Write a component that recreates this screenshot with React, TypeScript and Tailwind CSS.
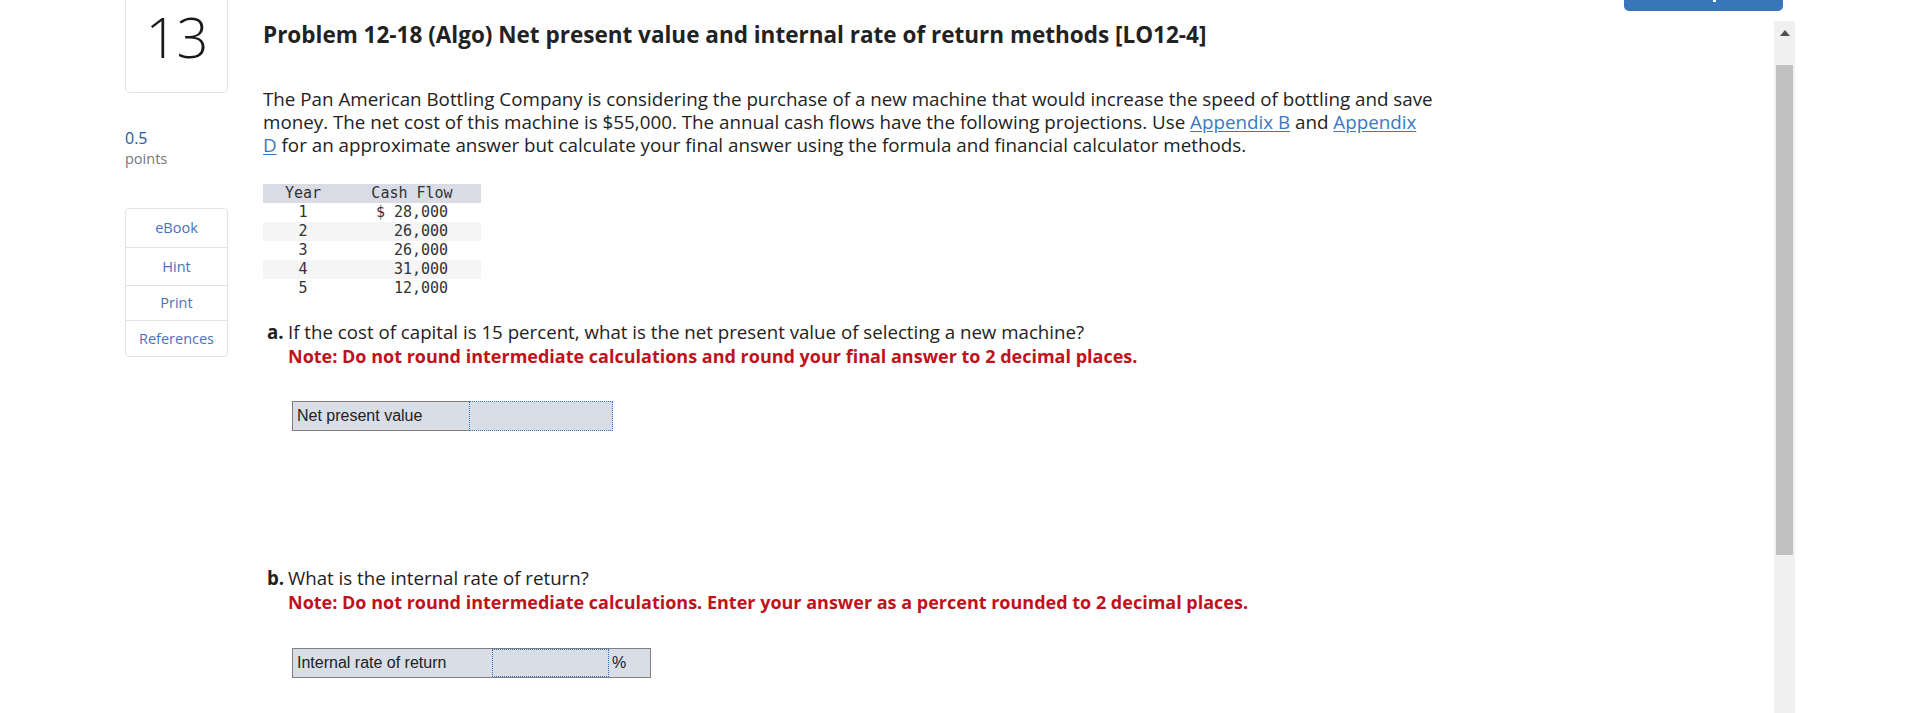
import React from 'react';

const rows = [
  { year: '1', cash: '$ 28,000' },
  { year: '2', cash: '  26,000' },
  { year: '3', cash: '  26,000' },
  { year: '4', cash: '  31,000' },
  { year: '5', cash: '  12,000' },
];

const tools = [
  { label: 'eBook', h: 'h-[38px]' },
  { label: 'Hint', h: 'h-[38px]' },
  { label: 'Print', h: 'h-[35px]' },
  { label: 'References', h: 'h-[36px]' },
];

function DottedInput({ w }: { w: string }) {
  return <div className={`${w} h-full border border-dotted border-[#2f6fc0] bg-[#d9dde6]`} />;
}

export default function App() {
  return (
    <div className="relative min-h-[713px] bg-white font-['Open_Sans',sans-serif] text-[#222]">
      {/* top action button, clipped by the viewport */}
      <div className="absolute left-[1624px] top-0 h-[11px] w-[159px] rounded-b-[5px] bg-[#3876b9]">
        <span className="absolute left-[89px] top-0 h-[2px] w-[3px] bg-white" />
      </div>

      <div className="flex">
        {/* Left rail */}
        <aside className="ml-[125px] w-[103px] shrink-0">
          <div className="flex h-[93px] items-start justify-center rounded-b-[5px] border border-t-0 border-[#e3e3e3]">
            <span className="text-[56px] font-light leading-[72px] tracking-[-1px] text-[#1a1a1a]">13</span>
          </div>
          <div className="mt-[35px] text-[16px] leading-[20px] text-[#2a5897]">0.5</div>
          <div className="mt-[1px] text-[14.5px] leading-[20px] text-[#777]">points</div>
          <div className="mt-[39px] overflow-hidden rounded-[4px] border border-[#e3e3e3]">
            {tools.map((t, i) => (
              <div
                key={t.label}
                className={`${t.h} flex items-center justify-center text-[14.5px] text-[#4a72b6] ${i > 0 ? 'border-t border-[#e3e3e3]' : ''}`}
              >
                {t.label}
              </div>
            ))}
          </div>
        </aside>

        {/* Question body */}
        <main className="ml-[35px] min-w-0 flex-1 pt-[20px]">
          <h1 className="text-[22.5px] font-bold leading-[30px] text-[#222]">
            Problem 12-18 (Algo) Net present value and internal rate of return methods [LO12-4]
          </h1>

          <p className="mt-[38px] w-[1300px] text-[18.8px] leading-[23px] text-[#222]">
            The Pan American Bottling Company is considering the purchase of a new machine that would increase the speed of bottling and save
            <br />
            money. The net cost of this machine is $55,000. The annual cash flows have the following projections. Use{' '}
            <a className="text-[#3b78c3] underline underline-offset-2">Appendix B</a> and{' '}
            <a className="text-[#3b78c3] underline underline-offset-2">Appendix</a>
            <br />
            <a className="text-[#3b78c3] underline underline-offset-2">D</a> for an approximate answer but calculate your final answer using the formula and financial calculator methods.
          </p>

          <table className="mt-[27px] w-[218px] border-collapse font-['DejaVu_Sans_Mono',monospace] text-[15px] text-[#333]">
            <thead>
              <tr className="h-[19px] bg-[#d9dce5]">
                <th className="w-[80px] p-0 text-center font-normal leading-[19px]">Year</th>
                <th className="p-0 text-center font-normal leading-[19px]">Cash Flow</th>
              </tr>
            </thead>
            <tbody>
              {rows.map((r, i) => (
                <tr key={r.year} className={`h-[19px] ${i % 2 === 1 ? 'bg-[#f5f5f5]' : ''}`}>
                  <td className="p-0 text-center leading-[19px]">{r.year}</td>
                  <td className="whitespace-pre p-0 text-center leading-[19px]">{r.cash}</td>
                </tr>
              ))}
            </tbody>
          </table>

          {/* Part a */}
          <div className="mt-[22px] pl-[4px] text-[18.7px] leading-[24px]">
            <span className="inline-block w-[21px] font-bold text-[#222]">a.</span>
            If the cost of capital is 15 percent, what is the net present value of selecting a new machine?
          </div>
          <div className="ml-[25px] text-[18px] font-bold leading-[24px] text-[#c0121c]">
            Note: Do not round intermediate calculations and round your final answer to 2 decimal places.
          </div>
          <div className="ml-[29px] mt-[33px] flex h-[30px] w-fit font-['Liberation_Sans',Arial,sans-serif] text-[16px] text-[#222]">
            <div className="flex w-[177px] items-center border border-r-0 border-[#7f7f7f] bg-[#d9dde6] pl-[4px]">
              Net present value
            </div>
            <DottedInput w="w-[144px]" />
          </div>

          {/* Part b */}
          <div className="mt-[135px] pl-[4px] text-[18.7px] leading-[24px]">
            <span className="inline-block w-[21px] font-bold text-[#222]">b.</span>
            What is the internal rate of return?
          </div>
          <div className="ml-[25px] text-[18px] font-bold leading-[24px] text-[#c0121c]">
            Note: Do not round intermediate calculations. Enter your answer as a percent rounded to 2 decimal places.
          </div>
          <div className="ml-[29px] mt-[34px] flex h-[30px] w-fit border border-[#7f7f7f] bg-[#d9dde6] font-['Liberation_Sans',Arial,sans-serif] text-[16px] text-[#222]">
            <div className="flex w-[199px] items-center pl-[4px]">Internal rate of return</div>
            <DottedInput w="w-[117px]" />
            <div className="flex w-[41px] items-center pl-[3px]">%</div>
          </div>
        </main>

        {/* Scroll track */}
        <div className="mt-[21px] flex h-[692px] w-[21px] shrink-0 flex-col items-center bg-[#f0f0f0]">
          <svg width="10" height="6" viewBox="0 0 10 6" className="mt-[9px]">
            <path d="M5 0 L10 6 L0 6 Z" fill="#505050" />
          </svg>
          <div className="mt-[29px] h-[490px] w-[17px] bg-[#c1c1c1]" />
        </div>
        <div className="w-[125px] shrink-0" />
      </div>
    </div>
  );
}
